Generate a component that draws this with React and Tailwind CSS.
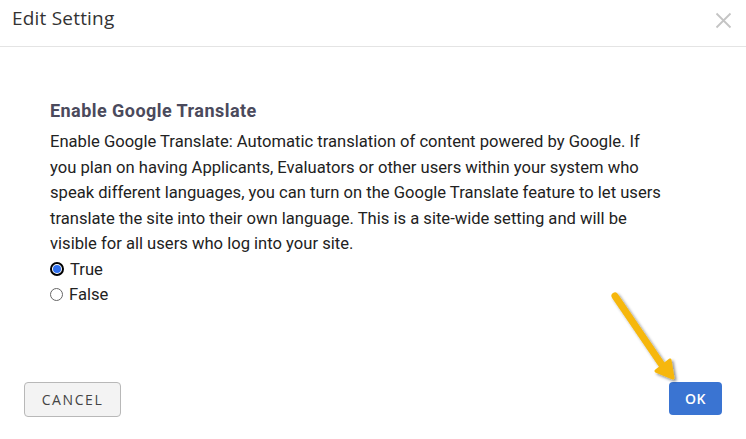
export default function App() {
  return (
    <div className="relative w-[746px] h-[439px] bg-white overflow-hidden">
      {/* header */}
      <div className="flex items-center justify-between h-[47px] pl-3 pr-[14px] border-b border-[#e4e4e4]">
        <h2 className="text-[19px] text-[#333] font-['Open_Sans',sans-serif] tracking-[0.2px] -mt-[10px]">
          Edit Setting
        </h2>
        <svg width="17" height="17" viewBox="0 0 17 17" className="-mt-[6px]">
          <path d="M1.5 1.5 L15.5 15.5 M15.5 1.5 L1.5 15.5" stroke="#c4c4c4" strokeWidth="1.8" />
        </svg>
      </div>

      {/* body */}
      <div className="pl-[50px] pr-[30px] pt-[52px] font-['Roboto',sans-serif] text-[#222]">
        <h3 className="text-[18px] font-bold text-[#4b4a5c] leading-[24px] tracking-[0.45px]">
          Enable Google Translate
        </h3>
        <p className="mt-[6px] text-[16.6px] leading-[25.5px] whitespace-nowrap">
          Enable Google Translate: Automatic translation of content powered by Google. If
          <br />
          you plan on having Applicants, Evaluators or other users within your system who
          <br />
          speak different languages, you can turn on the Google Translate feature to let users
          <br />
          translate the site into their own language. This is a site-wide setting and will be
          <br />
          visible for all users who log into your site.
        </p>
        <div className="flex flex-col">
          <label className="flex items-center gap-[6px] text-[16.6px] leading-[25px]">
            <span className="w-[14px] h-[14px] rounded-full border-[2px] border-black bg-white flex items-center justify-center">
              <span className="w-[8px] h-[8px] rounded-full bg-[#2f6fed]" />
            </span>
            True
          </label>
          <label className="flex items-center gap-[6px] text-[16.6px] leading-[25px]">
            <span className="w-[13px] h-[13px] rounded-full border border-[#666] bg-white" />
            False
          </label>
        </div>
      </div>

      {/* footer */}
      <div className="absolute left-6 right-6 top-[382px] flex justify-between">
        <button className="w-[97px] h-[35px] rounded-[4px] border border-[#b8b8b8] bg-[#f3f3f3] text-[14px] text-[#444] tracking-[1.6px] font-['Open_Sans',sans-serif]">
          CANCEL
        </button>
        <button className="w-[53px] h-[33px] rounded-[4px] bg-[#3a74d2] text-white text-[14px] font-semibold tracking-[0.5px] font-['Open_Sans',sans-serif]">
          OK
        </button>
      </div>

      {/* annotation arrow */}
      <svg className="absolute left-0 top-0 pointer-events-none" width="746" height="439">
        <defs>
          <filter id="sh" x="-20%" y="-20%" width="140%" height="140%">
            <feDropShadow dx="2" dy="2" stdDeviation="1.5" floodColor="#000" floodOpacity="0.45" />
          </filter>
        </defs>
        <g filter="url(#sh)">
          <path d="M615 296 L664 368" stroke="#f6b70a" strokeWidth="7" strokeLinecap="round" />
          <path d="M656 371 L673 378 L670 360 Z" fill="#f6b70a" stroke="#f6b70a" strokeWidth="3" strokeLinejoin="round" />
        </g>
      </svg>
    </div>
  );
}
